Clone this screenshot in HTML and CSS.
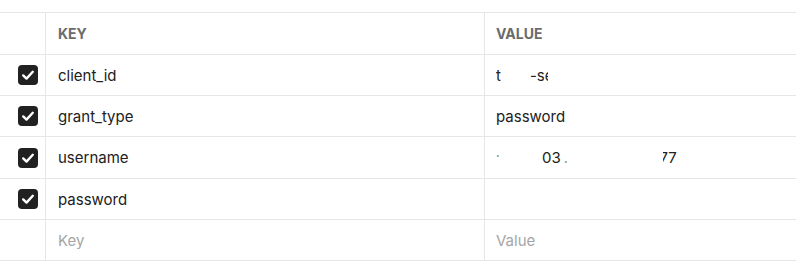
FILE: index.html
```html
<!DOCTYPE html>
<html>
<head>
<meta charset="utf-8">
<link rel="stylesheet" href="styles.css">
</head>
<body>
<div class="table">
  <div class="row head">
    <div class="cell check"></div>
    <div class="cell key">KEY</div>
    <div class="cell value">VALUE</div>
  </div>
  <div class="row">
    <div class="cell check"><span class="box"><svg viewBox="0 0 20 20" width="20" height="20"><path d="M5.2 10.4 L8.5 13.6 L14.8 6.8" fill="none" stroke="#fff" stroke-width="2.4" stroke-linecap="round" stroke-linejoin="round"/></svg></span></div>
    <div class="cell key">client_id</div>
    <div class="cell value"><span class="frag">t</span><span class="frag f1">-se</span></div>
  </div>
  <div class="row">
    <div class="cell check"><span class="box"><svg viewBox="0 0 20 20" width="20" height="20"><path d="M5.2 10.4 L8.5 13.6 L14.8 6.8" fill="none" stroke="#fff" stroke-width="2.4" stroke-linecap="round" stroke-linejoin="round"/></svg></span></div>
    <div class="cell key">grant_type</div>
    <div class="cell value">password</div>
  </div>
  <div class="row tall">
    <div class="cell check"><span class="box"><svg viewBox="0 0 20 20" width="20" height="20"><path d="M5.2 10.4 L8.5 13.6 L14.8 6.8" fill="none" stroke="#fff" stroke-width="2.4" stroke-linecap="round" stroke-linejoin="round"/></svg></span></div>
    <div class="cell key">username</div>
    <div class="cell value"><span class="frag u0">l</span><span class="frag u1">03</span><span class="frag u2">.</span><span class="frag u3">77</span></div>
  </div>
  <div class="row">
    <div class="cell check"><span class="box"><svg viewBox="0 0 20 20" width="20" height="20"><path d="M5.2 10.4 L8.5 13.6 L14.8 6.8" fill="none" stroke="#fff" stroke-width="2.4" stroke-linecap="round" stroke-linejoin="round"/></svg></span></div>
    <div class="cell key">password</div>
    <div class="cell value"></div>
  </div>
  <div class="row">
    <div class="cell check"></div>
    <div class="cell key ph">Key</div>
    <div class="cell value ph">Value</div>
  </div>
</div>
</body>
</html>
```

FILE: styles.css
```css
html, body {
  margin: 0;
  padding: 0;
  background: #ffffff;
}
body {
  font-family: "Inter", "Liberation Sans", sans-serif;
  color: #212121;
  font-size: 15px;
}
.table {
  margin-top: 12px;
  border-top: 1px solid #e6e6e6;
}
.row {
  display: grid;
  grid-template-columns: 46px 439px 1fr;
  height: 41px;
  border-bottom: 1px solid #e6e6e6;
  box-sizing: border-box;
}
.row.head {
  height: 42px;
}
.row.tall {
  height: 42px;
}
.cell {
  display: flex;
  align-items: center;
  box-sizing: border-box;
  white-space: nowrap;
  overflow: hidden;
}
.check {
  border-right: 1px solid #e6e6e6;
  justify-content: flex-start;
  padding-left: 18px;
}
.key {
  border-right: 1px solid #e6e6e6;
  padding-left: 12px;
}
.value {
  padding-left: 11px;
}
.head .cell {
  font-size: 14px;
  font-weight: 650;
  color: #6b6b6b;
}
.box {
  width: 20px;
  height: 20px;
  border-radius: 4px;
  background: #212121;
  display: block;
}
.box svg {
  display: block;
}
.ph {
  color: #a6a6a6;
}
.frag {
  display: inline-block;
  overflow: hidden;
}
.f1 {
  margin-left: 29px;
  width: 18px;
}
.u0 {
  height: 6px;
  align-self: center;
  margin-top: -8px;
  width: 3px;
  color: #888;
}
.u1 {
  margin-left: 43px;
}
.u2 {
  margin-left: 3px;
  width: 3px;
  color: #999;
}
.u3 {
  margin-left: 96px;
  width: 14px;
  direction: rtl;
}
```
